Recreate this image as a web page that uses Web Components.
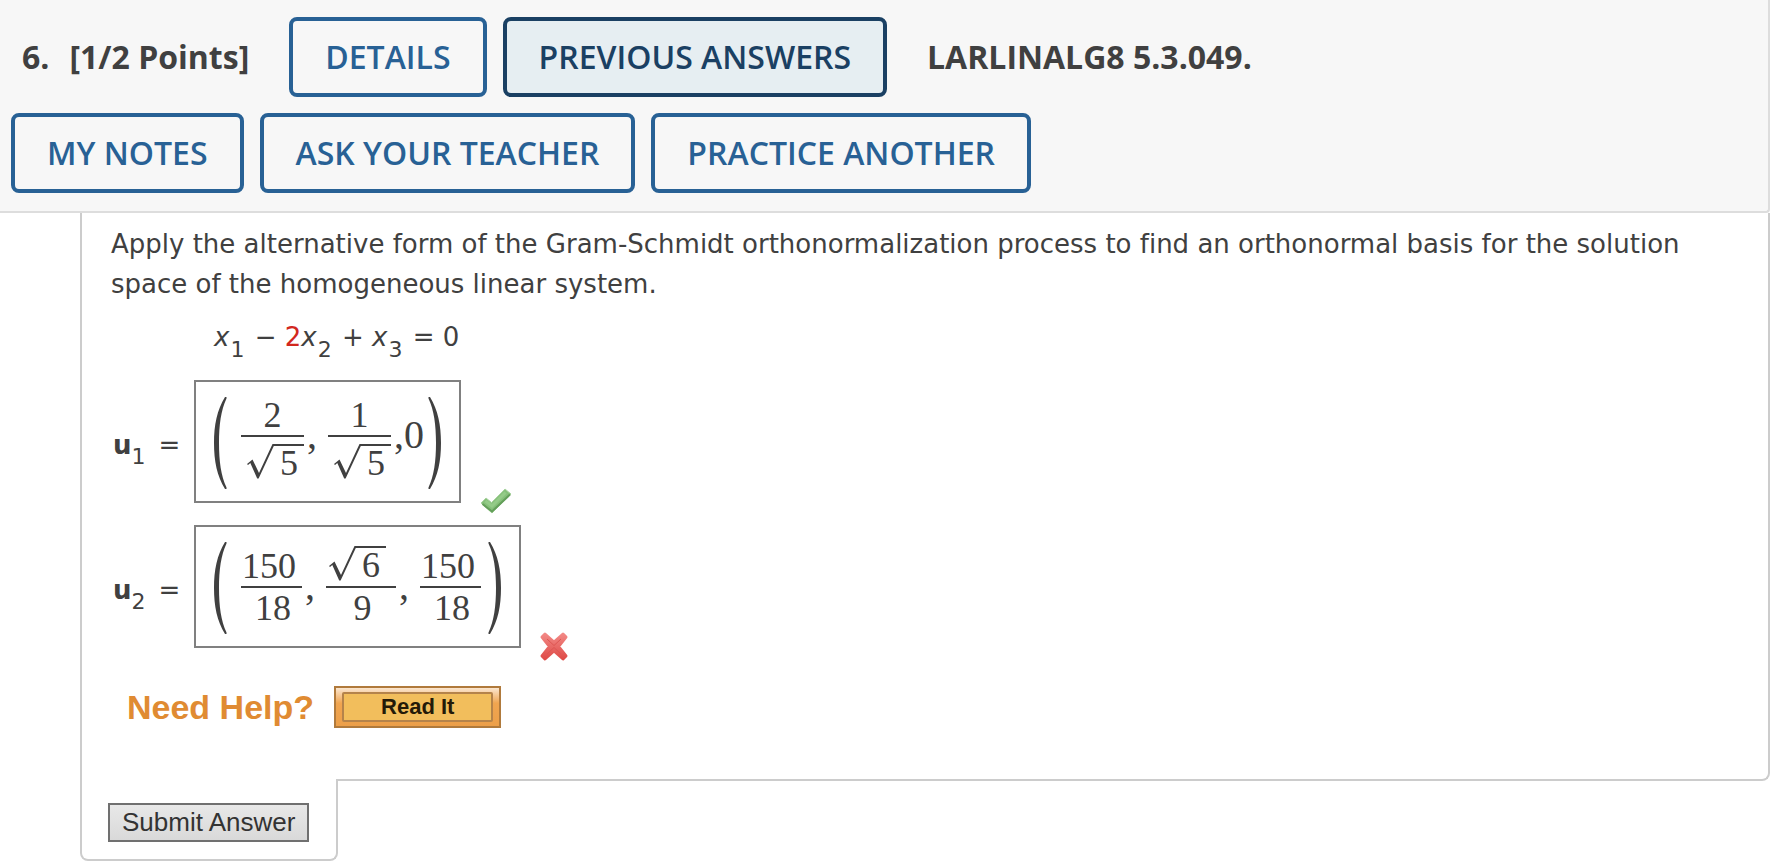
<!DOCTYPE html>
<html lang="en">
<head>
    <meta charset="utf-8">
    <title>LARLINALG8 5.3.049</title>
    <style>
        body {
            margin: 0;
            background: #fff;
            color: #404040;
            font-family: "DejaVu Sans", Verdana, sans-serif;
            font-size: 26px;
            font-variant-ligatures: none;
            line-height: 40px;
        }
    </style>
</head>
<body>
    <question-page></question-page>

    <script>
        (function (window, undefined) {
            'use strict'

            class NavButton extends HTMLElement {
                constructor() {
                    super();
                    this.attachShadow({ mode: 'open' }).innerHTML = `
                    <style>
                        :host { display: block; }
                        button {
                            box-sizing: border-box;
                            height: 80px;
                            padding: 0 32px;
                            border: 4px solid #286195;
                            border-radius: 8px;
                            background: transparent;
                            color: #286195;
                            font: 600 32px/40px "Open Sans", sans-serif;
                            white-space: nowrap;
                            cursor: pointer;
                        }
                        :host([active]) button {
                            border-color: #1a4063;
                            background: #e6eef2;
                            color: #1a4063;
                        }
                    </style>
                    <button type="button"><slot></slot></button>
                    `;
                }
            }

            class QuestionHeader extends HTMLElement {
                constructor() {
                    super();
                    this.attachShadow({ mode: 'open' }).innerHTML = `
                    <style>
                        :host {
                            display: block;
                            margin-right: 2px;
                            padding: 17px 11px 18px;
                            border-right: 2px solid #ddd;
                            border-bottom: 2px solid #ddd;
                            border-bottom-right-radius: 4px;
                            background: #f7f7f7;
                            font: 700 32px/40px "Open Sans", sans-serif;
                        }
                        .row {
                            display: flex;
                            flex-wrap: wrap;
                            align-items: center;
                            gap: 16px;
                        }
                        .row + .row { margin-top: 16px; }
                        h2 {
                            display: flex;
                            gap: 20px;
                            margin: 0 24px 0 11px;
                            font: inherit;
                        }
                        .code { margin-left: 24px; }
                    </style>
                    <div class="row">
                        <h2><span>${this.getAttribute('number')}</span><span>${this.getAttribute('points')}</span></h2>
                        <nav-button>DETAILS</nav-button>
                        <nav-button active>PREVIOUS ANSWERS</nav-button>
                        <span class="code">${this.getAttribute('code')}</span>
                    </div>
                    <div class="row">
                        <nav-button>MY NOTES</nav-button>
                        <nav-button>ASK YOUR TEACHER</nav-button>
                        <nav-button>PRACTICE ANOTHER</nav-button>
                    </div>
                    `;
                }
            }

            class MathRoot extends HTMLElement {
                constructor() {
                    super();
                    this.attachShadow({ mode: 'open' }).innerHTML = `
                    <style>
                        :host { display: inline-flex; height: 36px; }
                        svg { display: block; width: 29px; height: 36px; }
                        span {
                            padding: 0 6px 0 5px;
                            border-top: 2px solid currentColor;
                            line-height: 34px;
                        }
                    </style>
                    <svg viewBox="0 0 29 36" fill="currentColor" aria-hidden="true">
                        <path d="M1 20 L6.500 15.500 L13 29 L26.500 0 H29 V2 H27.800 L12.600 34.500 H11.200 L4.300 19 L2 21 Z"/>
                    </svg>
                    <span><slot></slot></span>
                    `;
                }
            }

            class MathFraction extends HTMLElement {
                constructor() {
                    super();
                    this.attachShadow({ mode: 'open' }).innerHTML = `
                    <style>
                        :host {
                            display: flex;
                            flex-direction: column;
                            margin-right: 3px;
                            font-size: 36px;
                            line-height: 36px;
                        }
                        div { display: flex; justify-content: center; }
                        .num {
                            align-items: flex-end;
                            height: calc(var(--rise) - 2px);
                            padding: 0 6px 2px 1px;
                            border-bottom: 2px solid currentColor;
                        }
                        .den { padding: 2px 0 0 3px; }
                        :host([root="den"]) .num { padding-right: 1px; }
                        :host([root="den"]) .den { padding: 7px 0 0 5px; }
                        :host([root="num"]) .num {
                            height: calc(var(--rise) - 4px);
                            padding: 0 10px 4px 2px;
                        }
                    </style>
                    <div class="num"><slot name="num"></slot></div>
                    <div class="den"><slot name="den"></slot></div>
                    `;
                }
            }

            class MathVector extends HTMLElement {
                constructor() {
                    super();
                    const paren = 'M11 0 H12.500 V1.500 C7 13 5 28 5 46 C5 64 7 79 12.500 90.500 V92 H11 C3 79 0 64 0 46 C0 28 3 13 11 0 Z';
                    this.attachShadow({ mode: 'open' }).innerHTML = `
                    <style>
                        :host {
                            display: flex;
                            padding: 15px 18px 12px;
                            border: 2px solid #808080;
                            background: #fff;
                            font: 40px/40px "Liberation Serif", serif;
                            --rise: 38px;
                        }
                        :host([tall]) { --rise: 44px; }
                        svg { flex: none; width: 13px; height: 92px; }
                        .open { margin-right: 14px; }
                        .close { margin-left: 4px; transform: scaleX(-1); }
                        ::slotted(span) { margin-top: calc(var(--rise) - 20px); }
                        ::slotted(.sep) { margin-right: 11px; }
                    </style>
                    <svg class="open" viewBox="0 0 13 92" fill="currentColor" aria-hidden="true">
                        <path d="${paren}"/>
                    </svg>
                    <slot></slot>
                    <svg class="close" viewBox="0 0 13 92" fill="currentColor" aria-hidden="true">
                        <path d="${paren}"/>
                    </svg>
                    `;
                }
            }

            class AnswerMark extends HTMLElement {
                constructor() {
                    super();
                    const correct = this.getAttribute('state') === 'correct';
                    const icon = correct ? `
                        <path d="M1 15 L6 10 L11.500 14.500 L25 1 L31 6 L12 25 Z" fill="#86c07a" stroke="#a9d3a0" stroke-width="1" stroke-linejoin="round"/>
                        <path d="M2.500 16 L12 23.500 L30 6.500" fill="none" stroke="#649f5a" stroke-width="2"/>
                        <path d="M5.500 13 L12 18 L25.500 4.500" fill="none" stroke="#94cb88" stroke-width="3"/>
                    ` : `
                        <path d="M2 4 L5 1 L14 9 L23 1 L26 4 L18.500 13.500 L26 23 L23 26 L14 18 L5 26 L2 23 L9.500 13.500 Z"
                            fill="url(#red)" stroke="url(#red)" stroke-width="3" stroke-linejoin="round"/>
                        <path d="M7 6 L14 12.500 L21 6 M7 21 L14 14.500 L21 21" fill="none" stroke="#dd5552" stroke-width="1"/>
                    `;
                    this.attachShadow({ mode: 'open' }).innerHTML = `
                    <style>
                        :host { display: block; }
                        svg { display: block; overflow: visible; }
                    </style>
                    <svg width="32" height="25" role="img" aria-label="${correct ? 'Correct' : 'Incorrect'}">
                        <defs>
                            <linearGradient id="red" x1="0" y1="0" x2="0" y2="1">
                                <stop offset="0" stop-color="#f28885"/>
                                <stop offset="1" stop-color="#df4b47"/>
                            </linearGradient>
                        </defs>
                        ${icon}
                    </svg>
                    `;
                }
            }

            class AnswerRow extends HTMLElement {
                constructor() {
                    super();
                    this.attachShadow({ mode: 'open' }).innerHTML = `
                    <style>
                        :host {
                            display: flex;
                            align-items: flex-end;
                            margin-bottom: 12px;
                        }
                        .label {
                            display: flex;
                            align-self: center;
                            box-sizing: border-box;
                            width: 83px;
                            margin-bottom: 4px;
                            padding-left: 2px;
                        }
                        sub {
                            position: relative;
                            top: 12px;
                            font-size: 22px;
                            vertical-align: baseline;
                        }
                        .eq { margin-left: 13px; }
                        ::slotted(math-vector) { margin-bottom: 10px; }
                        answer-mark { margin-left: 19px; }
                    </style>
                    <div class="label"><b>u</b><sub>${this.getAttribute('index')}</sub><span class="eq">=</span></div>
                    <slot></slot>
                    <answer-mark state="${this.getAttribute('state')}"></answer-mark>
                    `;
                }
            }

            class NeedHelp extends HTMLElement {
                constructor() {
                    super();
                    this.attachShadow({ mode: 'open' }).innerHTML = `
                    <style>
                        :host {
                            display: flex;
                            align-items: center;
                            gap: 20px;
                            padding-left: 16px;
                            color: #e08b32;
                            font: 700 34px/40px "Liberation Sans", Arial, sans-serif;
                        }
                        button {
                            padding: 4px 6px;
                            border: 2px solid #b07a3c;
                            background: linear-gradient(#fbe6cf, #f0a550 40%, #ec9f49);
                            font: 700 22px/26px "Liberation Sans", Arial, sans-serif;
                            color: #241a08;
                            cursor: pointer;
                        }
                        button span {
                            display: block;
                            padding: 0 37px;
                            border: 2px solid #b5834a;
                            border-radius: 2px;
                            background: #f2be5c;
                        }
                    </style>
                    <span>Need Help?</span>
                    <button type="button"><span>Read It</span></button>
                    `;
                }
            }

            class SubmitTab extends HTMLElement {
                constructor() {
                    super();
                    this.attachShadow({ mode: 'open' }).innerHTML = `
                    <style>
                        :host {
                            display: block;
                            width: fit-content;
                            padding: 24px 27px 17px 26px;
                            border: 2px solid #ccc;
                            border-top: 0;
                            border-radius: 0 0 8px 8px;
                            background: #fff;
                        }
                        button {
                            display: block;
                            padding: 0 12px 1px;
                            border: 2px solid #707070;
                            background: linear-gradient(#e8e8e8, #d9d9d9);
                            color: #333;
                            font: 26px/34px "Liberation Sans", Arial, sans-serif;
                            cursor: pointer;
                        }
                    </style>
                    <button type="submit"><slot></slot></button>
                    `;
                }
            }

            class QuestionPage extends HTMLElement {
                constructor() {
                    super();
                    this.attachShadow({ mode: 'open' }).innerHTML = `
                    <style>
                        :host { display: block; }
                        main { margin: 0 2px 4px 80px; }
                        .panel {
                            padding: 11px 29px 51px;
                            border: 2px solid #ccc;
                            border-top: 0;
                            border-bottom-right-radius: 8px;
                        }
                        p { margin: 0; }
                        .equation {
                            margin: 13px 0 23px 103px;
                        }
                        .equation sub {
                            position: relative;
                            top: 11px;
                            margin: 0 2px 0 1px;
                            font-size: 22px;
                            line-height: 22px;
                            vertical-align: baseline;
                        }
                        .red { color: #d2281e; }
                        need-help { margin-top: 28px; }
                        /* covers the panel's bottom line so the two shapes join */
                        submit-tab { position: relative; margin-top: -2px; }
                    </style>
                    <question-header number="6." points="[1/2 Points]" code="LARLINALG8 5.3.049."></question-header>
                    <main>
                        <div class="panel">
                            <p>Apply the alternative form of the Gram-Schmidt orthonormalization process to find an orthonormal basis for the solution space of the homogeneous linear system.</p>
                            <p class="equation"><i>x</i><sub>1</sub> − <span class="red">2</span><i>x</i><sub>2</sub> + <i>x</i><sub>3</sub> = 0</p>
                            <answer-row index="1" state="correct">
                                <math-vector>
                                    <math-fraction root="den"><span slot="num">2</span><math-root slot="den">5</math-root></math-fraction>
                                    <span class="sep">,</span>
                                    <math-fraction root="den"><span slot="num">1</span><math-root slot="den">5</math-root></math-fraction>
                                    <span>,</span><span>0</span>
                                </math-vector>
                            </answer-row>
                            <answer-row index="2" state="incorrect">
                                <math-vector tall>
                                    <math-fraction><span slot="num">150</span><span slot="den">18</span></math-fraction>
                                    <span class="sep">,</span>
                                    <math-fraction root="num"><math-root slot="num">6</math-root><span slot="den">9</span></math-fraction>
                                    <span class="sep">,</span>
                                    <math-fraction><span slot="num">150</span><span slot="den">18</span></math-fraction>
                                </math-vector>
                            </answer-row>
                            <need-help></need-help>
                        </div>
                        <submit-tab>Submit Answer</submit-tab>
                    </main>
                    `;
                }
            }

            customElements.define('nav-button', NavButton);
            customElements.define('question-header', QuestionHeader);
            customElements.define('math-root', MathRoot);
            customElements.define('math-fraction', MathFraction);
            customElements.define('math-vector', MathVector);
            customElements.define('answer-mark', AnswerMark);
            customElements.define('answer-row', AnswerRow);
            customElements.define('need-help', NeedHelp);
            customElements.define('submit-tab', SubmitTab);
            customElements.define('question-page', QuestionPage);

        })(window);
    </script>
</body>
</html>
